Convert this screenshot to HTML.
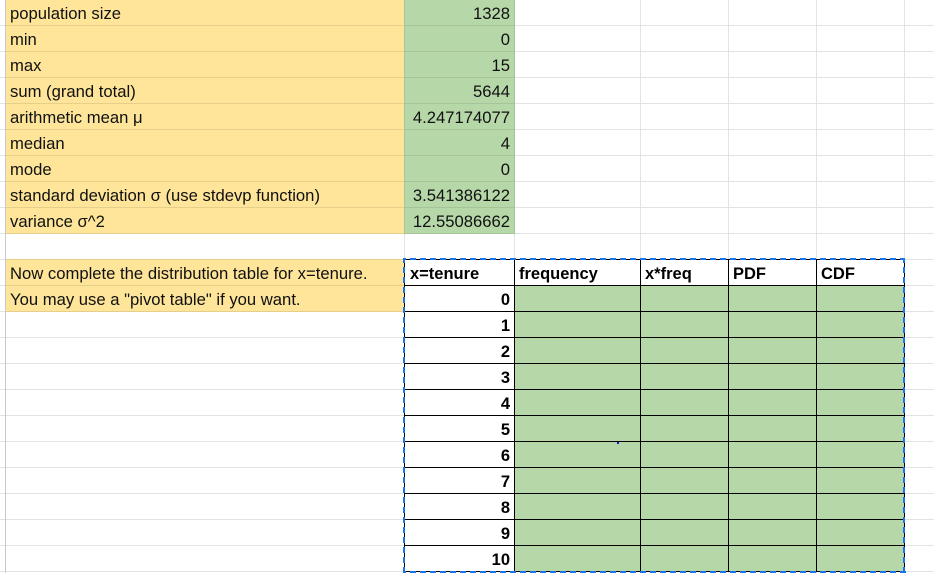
<!DOCTYPE html>
<html>
<head>
<meta charset="utf-8">
<style>
html,body{margin:0;padding:0;background:#fff;}
body{width:934px;height:573px;overflow:hidden;position:relative;font-family:"Liberation Sans",Arial,sans-serif;font-size:16.65px;color:#111;}
svg{position:absolute;left:0;top:0;}
.t{position:absolute;height:26px;line-height:28px;white-space:nowrap;}
.l{left:10px;}
.r{right:424px;text-align:right;}
.b{font-weight:bold;color:#000;font-size:16.5px;}
</style>
</head>
<body>
<svg width="934" height="573" viewBox="0 0 934 573" shape-rendering="crispEdges">
  <!-- grid -->
  <g fill="#e2e3e3">
    <rect x="0" y="25" width="934" height="1"/><rect x="0" y="51" width="934" height="1"/><rect x="0" y="77" width="934" height="1"/><rect x="0" y="103" width="934" height="1"/><rect x="0" y="129" width="934" height="1"/><rect x="0" y="155" width="934" height="1"/><rect x="0" y="181" width="934" height="1"/><rect x="0" y="207" width="934" height="1"/><rect x="0" y="233" width="934" height="1"/><rect x="0" y="259" width="934" height="1"/><rect x="0" y="285" width="934" height="1"/><rect x="0" y="311" width="934" height="1"/><rect x="0" y="337" width="934" height="1"/><rect x="0" y="363" width="934" height="1"/><rect x="0" y="389" width="934" height="1"/><rect x="0" y="415" width="934" height="1"/><rect x="0" y="441" width="934" height="1"/><rect x="0" y="467" width="934" height="1"/><rect x="0" y="493" width="934" height="1"/><rect x="0" y="519" width="934" height="1"/><rect x="0" y="545" width="934" height="1"/><rect x="0" y="571" width="934" height="1"/>
    <rect x="404" y="0" width="1" height="573"/><rect x="514" y="0" width="1" height="573"/><rect x="640" y="0" width="1" height="573"/><rect x="728" y="0" width="1" height="573"/><rect x="816" y="0" width="1" height="573"/><rect x="904" y="0" width="1" height="573"/>
  </g>
  <rect x="5" y="0" width="1" height="573" fill="#c9c9c9"/>
  <!-- yellow -->
  <rect x="6" y="0" width="398" height="233" fill="#ffe599"/>
  <rect x="6" y="260" width="398" height="51" fill="#ffe599"/>
  <g fill="#e6cf8b">
    <rect x="6" y="25" width="398" height="1"/><rect x="6" y="51" width="398" height="1"/><rect x="6" y="77" width="398" height="1"/><rect x="6" y="103" width="398" height="1"/><rect x="6" y="129" width="398" height="1"/><rect x="6" y="155" width="398" height="1"/><rect x="6" y="181" width="398" height="1"/><rect x="6" y="207" width="398" height="1"/><rect x="6" y="233" width="398" height="1"/><rect x="6" y="259" width="398" height="1"/><rect x="6" y="285" width="398" height="1"/><rect x="6" y="311" width="398" height="1"/>
  </g>
  <!-- green top -->
  <rect x="405" y="0" width="109" height="233" fill="#b6d7a8"/>
  <g fill="#a5c497">
    <rect x="404" y="0" width="1" height="234"/><rect x="514" y="0" width="1" height="234"/>
    <rect x="405" y="25" width="109" height="1"/><rect x="405" y="51" width="109" height="1"/><rect x="405" y="77" width="109" height="1"/><rect x="405" y="103" width="109" height="1"/><rect x="405" y="129" width="109" height="1"/><rect x="405" y="155" width="109" height="1"/><rect x="405" y="181" width="109" height="1"/><rect x="405" y="207" width="109" height="1"/><rect x="405" y="233" width="110" height="1"/>
  </g>
  <!-- table -->
  <rect x="404" y="259" width="501" height="313" fill="#fff"/>
  <rect x="515" y="286" width="389" height="285" fill="#b6d7a8"/>
  <g fill="#000">
    <rect x="404" y="259" width="501" height="1"/><rect x="404" y="285" width="501" height="1"/><rect x="404" y="311" width="501" height="1"/><rect x="404" y="337" width="501" height="1"/><rect x="404" y="363" width="501" height="1"/><rect x="404" y="389" width="501" height="1"/><rect x="404" y="415" width="501" height="1"/><rect x="404" y="441" width="501" height="1"/><rect x="404" y="467" width="501" height="1"/><rect x="404" y="493" width="501" height="1"/><rect x="404" y="519" width="501" height="1"/><rect x="404" y="545" width="501" height="1"/><rect x="404" y="571" width="501" height="1"/>
    <rect x="404" y="259" width="1" height="313"/><rect x="514" y="259" width="1" height="313"/><rect x="640" y="259" width="1" height="313"/><rect x="728" y="259" width="1" height="313"/><rect x="816" y="259" width="1" height="313"/><rect x="904" y="259" width="1" height="313"/>
  </g>
  <rect x="617" y="442" width="2" height="2" fill="#1a1acc"/>
  <!-- selection -->
  <g stroke="#1a73e8" stroke-width="2" fill="none">
    <path d="M403 259H905" stroke-dasharray="6 4" stroke-dashoffset="3"/>
    <path d="M403 572H906" stroke-dasharray="6 4" stroke-dashoffset="3"/>
    <path d="M404 258V573" stroke-dasharray="6 4" stroke-dashoffset="1"/>
    <path d="M904 258V573" stroke-dasharray="6 4" stroke-dashoffset="1"/>
  </g>
</svg>

<div class="t l" style="top:0">population size</div>
<div class="t l" style="top:26px">min</div>
<div class="t l" style="top:52px">max</div>
<div class="t l" style="top:78px">sum (grand total)</div>
<div class="t l" style="top:104px">arithmetic mean μ</div>
<div class="t l" style="top:130px">median</div>
<div class="t l" style="top:156px">mode</div>
<div class="t l" style="top:182px">standard deviation σ (use stdevp function)</div>
<div class="t l" style="top:208px">variance σ^2</div>
<div class="t l" style="top:260px">Now complete the distribution table for x=tenure.</div>
<div class="t l" style="top:286px">You may use a "pivot table" if you want.</div>

<div class="t r" style="top:0">1328</div>
<div class="t r" style="top:26px">0</div>
<div class="t r" style="top:52px">15</div>
<div class="t r" style="top:78px">5644</div>
<div class="t r" style="top:104px">4.247174077</div>
<div class="t r" style="top:130px">4</div>
<div class="t r" style="top:156px">0</div>
<div class="t r" style="top:182px">3.541386122</div>
<div class="t r" style="top:208px">12.55086662</div>

<div class="t b" style="top:260px;left:410px">x=tenure</div>
<div class="t b" style="top:260px;left:519px">frequency</div>
<div class="t b" style="top:260px;left:645px">x*freq</div>
<div class="t b" style="top:260px;left:733px">PDF</div>
<div class="t b" style="top:260px;left:821px">CDF</div>

<div class="t r b" style="top:286px">0</div>
<div class="t r b" style="top:312px">1</div>
<div class="t r b" style="top:338px">2</div>
<div class="t r b" style="top:364px">3</div>
<div class="t r b" style="top:390px">4</div>
<div class="t r b" style="top:416px">5</div>
<div class="t r b" style="top:442px">6</div>
<div class="t r b" style="top:468px">7</div>
<div class="t r b" style="top:494px">8</div>
<div class="t r b" style="top:520px">9</div>
<div class="t r b" style="top:546px">10</div>
</body>
</html>
